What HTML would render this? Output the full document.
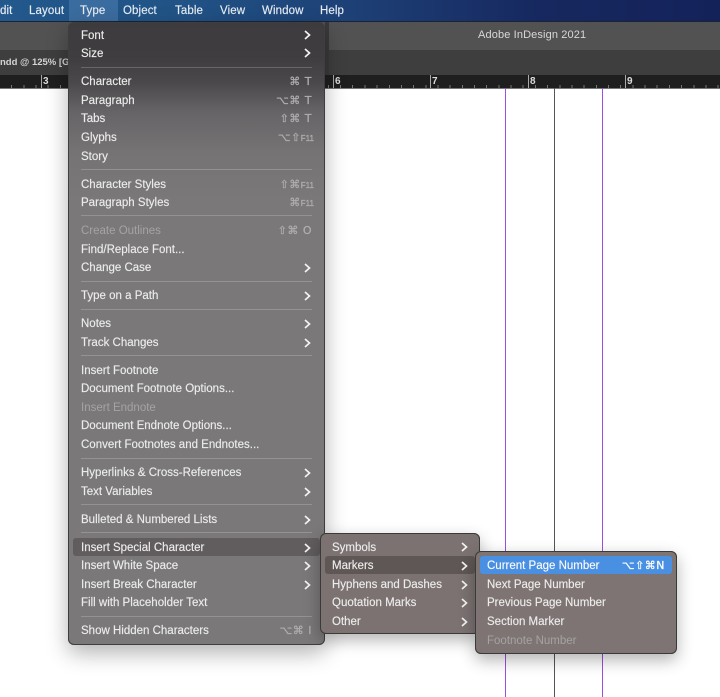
<!DOCTYPE html>
<html><head><meta charset="utf-8">
<style>
html,body{margin:0;padding:0;background:#fff}
#p{position:relative;width:720px;height:697px;overflow:hidden;background:#fff;font-family:"Liberation Sans",sans-serif;filter:blur(.25px)}
#p div,#p span.a{position:absolute}
.t{height:18px;line-height:18px;font-size:11.5px;letter-spacing:0;color:#ececec;white-space:nowrap;transform:translateY(1px);-webkit-text-stroke:.15px #ececec}
.d{color:#a5a3a4;-webkit-text-stroke:0}
.k{height:18px;line-height:18px;font-size:11px;color:#b0aeaf;white-space:nowrap;text-align:right;font-family:"DejaVu Sans","Liberation Sans",sans-serif;letter-spacing:.5px;transform:translateY(1px);-webkit-text-stroke:.25px currentColor}
.k small{font-size:8px;letter-spacing:0;font-family:"Liberation Sans",sans-serif}
.s{height:1px;background:rgba(255,255,255,.2)}
.m{font-size:11.5px;letter-spacing:.1px;color:#e8edf3;line-height:21px;height:21px;top:1px;white-space:nowrap;-webkit-text-stroke:.15px #e8edf3}
.r{font-size:10px;font-weight:bold;color:#ddd;line-height:12px;top:76px}
svg.c{position:absolute;width:7px;height:10px}
.g{top:88px;height:609px;width:1px}
</style></head><body>
<div id="p">
<!-- menu bar -->
<div style="left:0;top:0;width:720px;height:21px;background:linear-gradient(90deg,#22588c 0,#215386 25%,#1d3f75 50%,#16285f 75%,#14225a 100%)"></div>
<div style="left:0;top:21px;width:720px;height:1px;background:#1c2434"></div>
<div style="left:69px;top:0;width:49px;height:21px;background:#3b6c9f"></div>
<div class="m" style="left:0">dit</div>
<div class="m" style="left:29px">Layout</div>
<div class="m" style="left:80px">Type</div>
<div class="m" style="left:123px">Object</div>
<div class="m" style="left:175px">Table</div>
<div class="m" style="left:220px">View</div>
<div class="m" style="left:262px">Window</div>
<div class="m" style="left:320px">Help</div>
<!-- app bars -->
<div style="left:0;top:22px;width:720px;height:28px;background:#525252"></div>
<div style="left:0;top:50px;width:720px;height:25px;background:#3e3e3e"></div>
<div style="left:325px;top:22px;width:4px;height:53px;background:#3a3a3a"></div>
<div style="left:478px;top:22px;height:28px;line-height:27px;font-size:11px;letter-spacing:.13px;color:#d8d8d8;white-space:nowrap">Adobe InDesign 2021</div>
<div style="left:0;top:56px;height:13px;line-height:13px;font-size:9.5px;font-weight:bold;letter-spacing:0;color:#d4d4d4;white-space:nowrap;width:68px;overflow:hidden">ndd @ 125% [GF</div>
<!-- ruler -->
<div style="left:0;top:75px;width:720px;height:13px;background:#1f1f1f"></div>
<div style="left:0;top:85px;width:720px;height:3px;background:repeating-linear-gradient(90deg,transparent 0,transparent 11.18px,#777 11.18px,#777 12.18px)"></div>
<div style="left:41px;top:75px;width:1px;height:13px;background:#aaa"></div>
<div style="left:333px;top:75px;width:1px;height:13px;background:#aaa"></div>
<div style="left:430px;top:75px;width:1px;height:13px;background:#aaa"></div>
<div style="left:528px;top:75px;width:1px;height:13px;background:#aaa"></div>
<div style="left:625px;top:75px;width:1px;height:13px;background:#aaa"></div>
<div class="r" style="left:43px">3</div>
<div class="r" style="left:335px">6</div>
<div class="r" style="left:432px">7</div>
<div class="r" style="left:530px">8</div>
<div class="r" style="left:627px">9</div>
<div style="left:0;top:88px;width:720px;height:1px;background:#777"></div>
<!-- guides -->
<div class="g" style="left:505px;background:#9c4fe0"></div>
<div class="g" style="left:554px;background:#555"></div>
<div class="g" style="left:602px;background:#9c4fe0"></div>
<!-- main menu -->
<div style="left:68px;top:22px;width:257px;height:623px;border-radius:6px;box-shadow:inset 0 0 0 1px #3e3e3e,0 8px 22px rgba(0,0,0,.3);background:linear-gradient(180deg,#3d3b3d 0,#3f3d3f 35px,#4a484a 60px,#666466 90px,#757374 130px,#7a7879 180px,#7a7879 623px)"></div>

<div class="t" style="left:81px;top:26px">Font</div>
<div class="t" style="left:81px;top:44px">Size</div>
<div class="s" style="left:81px;top:67px;width:231px"></div>
<div class="t" style="left:81px;top:72px">Character</div>
<div class="t" style="left:81px;top:91px">Paragraph</div>
<div class="t" style="left:81px;top:109px">Tabs</div>
<div class="t" style="left:81px;top:128px">Glyphs</div>
<div class="t" style="left:81px;top:147px">Story</div>
<div class="s" style="left:81px;top:169px;width:231px"></div>
<div class="t" style="left:81px;top:175px">Character Styles</div>
<div class="t" style="left:81px;top:193px">Paragraph Styles</div>
<div class="s" style="left:81px;top:215px;width:231px"></div>
<div class="t d" style="left:81px;top:221px">Create Outlines</div>
<div class="t" style="left:81px;top:240px">Find/Replace Font...</div>
<div class="t" style="left:81px;top:258px">Change Case</div>
<div class="s" style="left:81px;top:281px;width:231px"></div>
<div class="t" style="left:81px;top:286px">Type on a Path</div>
<div class="s" style="left:81px;top:309px;width:231px"></div>
<div class="t" style="left:81px;top:314px">Notes</div>
<div class="t" style="left:81px;top:333px">Track Changes</div>
<div class="s" style="left:81px;top:355px;width:231px"></div>
<div class="t" style="left:81px;top:361px">Insert Footnote</div>
<div class="t" style="left:81px;top:379px">Document Footnote Options...</div>
<div class="t d" style="left:81px;top:398px">Insert Endnote</div>
<div class="t" style="left:81px;top:416px">Document Endnote Options...</div>
<div class="t" style="left:81px;top:435px">Convert Footnotes and Endnotes...</div>
<div class="s" style="left:81px;top:458px;width:231px"></div>
<div class="t" style="left:81px;top:463px">Hyperlinks &amp; Cross-References</div>
<div class="t" style="left:81px;top:482px">Text Variables</div>
<div class="s" style="left:81px;top:504px;width:231px"></div>
<div class="t" style="left:81px;top:510px">Bulleted &amp; Numbered Lists</div>
<div class="s" style="left:81px;top:532px;width:231px"></div>
<div style="left:73px;top:538px;width:247px;height:18px;background:#615d5e;border-radius:3px"></div>
<div class="t" style="left:81px;top:538px">Insert Special Character</div>
<div class="t" style="left:81px;top:556px">Insert White Space</div>
<div class="t" style="left:81px;top:575px">Insert Break Character</div>
<div class="t" style="left:81px;top:593px">Fill with Placeholder Text</div>
<div class="s" style="left:81px;top:616px;width:231px"></div>
<div class="t" style="left:81px;top:621px">Show Hidden Characters</div>

<!-- shortcuts -->
<div class="k" style="right:408px;top:72px">⌘ T</div>
<div class="k" style="right:408px;top:91px">⌥⌘ T</div>
<div class="k" style="right:408px;top:109px">⇧⌘ T</div>
<div class="k" style="right:406px;top:128px">⌥⇧<small>F11</small></div>
<div class="k" style="right:406px;top:175px">⇧⌘<small>F11</small></div>
<div class="k" style="right:406px;top:193px">⌘<small>F11</small></div>
<div class="k" style="right:408px;top:221px">⇧⌘ O</div>
<div class="k" style="right:408px;top:621px">⌥⌘ I</div>

<!-- chevrons main -->
<svg class="c" style="left:304px;top:30px" viewBox="0 0 7 10"><path d="M1 1l4.5 4L1 9" fill="none" stroke="#f2f2f2" stroke-width="1.7"/></svg>
<svg class="c" style="left:304px;top:48px" viewBox="0 0 7 10"><path d="M1 1l4.5 4L1 9" fill="none" stroke="#f2f2f2" stroke-width="1.7"/></svg>
<svg class="c" style="left:304px;top:263px" viewBox="0 0 7 10"><path d="M1 1l4.5 4L1 9" fill="none" stroke="#f2f2f2" stroke-width="1.7"/></svg>
<svg class="c" style="left:304px;top:291px" viewBox="0 0 7 10"><path d="M1 1l4.5 4L1 9" fill="none" stroke="#f2f2f2" stroke-width="1.7"/></svg>
<svg class="c" style="left:304px;top:319px" viewBox="0 0 7 10"><path d="M1 1l4.5 4L1 9" fill="none" stroke="#f2f2f2" stroke-width="1.7"/></svg>
<svg class="c" style="left:304px;top:338px" viewBox="0 0 7 10"><path d="M1 1l4.5 4L1 9" fill="none" stroke="#f2f2f2" stroke-width="1.7"/></svg>
<svg class="c" style="left:304px;top:468px" viewBox="0 0 7 10"><path d="M1 1l4.5 4L1 9" fill="none" stroke="#f2f2f2" stroke-width="1.7"/></svg>
<svg class="c" style="left:304px;top:487px" viewBox="0 0 7 10"><path d="M1 1l4.5 4L1 9" fill="none" stroke="#f2f2f2" stroke-width="1.7"/></svg>
<svg class="c" style="left:304px;top:515px" viewBox="0 0 7 10"><path d="M1 1l4.5 4L1 9" fill="none" stroke="#f2f2f2" stroke-width="1.7"/></svg>
<svg class="c" style="left:304px;top:543px" viewBox="0 0 7 10"><path d="M1 1l4.5 4L1 9" fill="none" stroke="#f2f2f2" stroke-width="1.7"/></svg>
<svg class="c" style="left:304px;top:561px" viewBox="0 0 7 10"><path d="M1 1l4.5 4L1 9" fill="none" stroke="#f2f2f2" stroke-width="1.7"/></svg>
<svg class="c" style="left:304px;top:580px" viewBox="0 0 7 10"><path d="M1 1l4.5 4L1 9" fill="none" stroke="#f2f2f2" stroke-width="1.7"/></svg>

<!-- submenu 1 -->
<div style="left:320px;top:533px;width:160px;height:101px;border-radius:6px;background:#7b7271;box-shadow:inset 0 0 0 1px #3a3a3a,0 6px 16px rgba(0,0,0,.3)"></div>
<div style="left:325px;top:556px;width:150px;height:18px;background:#5f5755;border-radius:3px"></div>
<div class="t" style="left:332px;top:538px">Symbols</div>
<div class="t" style="left:332px;top:556px">Markers</div>
<div class="t" style="left:332px;top:575px">Hyphens and Dashes</div>
<div class="t" style="left:332px;top:593px">Quotation Marks</div>
<div class="t" style="left:332px;top:612px">Other</div>
<svg class="c" style="left:461px;top:542px" viewBox="0 0 7 10"><path d="M1 1l4.5 4L1 9" fill="none" stroke="#f2f2f2" stroke-width="1.7"/></svg>
<svg class="c" style="left:461px;top:561px" viewBox="0 0 7 10"><path d="M1 1l4.5 4L1 9" fill="none" stroke="#f2f2f2" stroke-width="1.7"/></svg>
<svg class="c" style="left:461px;top:580px" viewBox="0 0 7 10"><path d="M1 1l4.5 4L1 9" fill="none" stroke="#f2f2f2" stroke-width="1.7"/></svg>
<svg class="c" style="left:461px;top:598px" viewBox="0 0 7 10"><path d="M1 1l4.5 4L1 9" fill="none" stroke="#f2f2f2" stroke-width="1.7"/></svg>
<svg class="c" style="left:461px;top:617px" viewBox="0 0 7 10"><path d="M1 1l4.5 4L1 9" fill="none" stroke="#f2f2f2" stroke-width="1.7"/></svg>

<!-- submenu 2 -->
<div style="left:475px;top:551px;width:202px;height:103px;border-radius:6px;background:#7e7473;box-shadow:inset 0 0 0 1px #3a3a3a,0 6px 16px rgba(0,0,0,.3)"></div>
<div style="left:480px;top:556px;width:192px;height:18px;background:#4a90e2;border-radius:3px"></div>
<div class="t" style="left:487px;top:556px;color:#fff">Current Page Number</div>
<div class="k" style="right:55px;top:556px;color:#fff">⌥⇧⌘N</div>
<div class="t" style="left:487px;top:575px">Next Page Number</div>
<div class="t" style="left:487px;top:593px">Previous Page Number</div>
<div class="t" style="left:487px;top:612px">Section Marker</div>
<div class="t d" style="left:487px;top:631px">Footnote Number</div>
</div>
</body></html>
